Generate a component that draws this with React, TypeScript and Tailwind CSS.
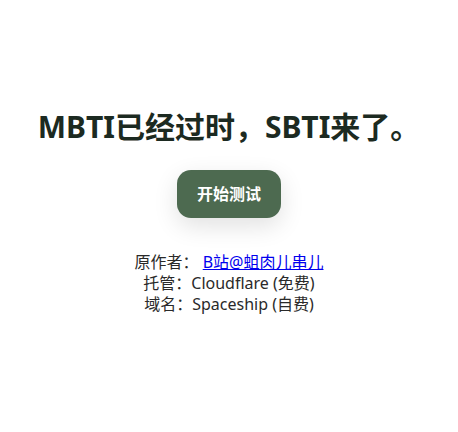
export default function App(): JSX.Element {
  return (
    <div
      className="min-h-screen bg-white flex flex-col items-center justify-center px-4 pb-[10px] text-center"
      style={{ fontFamily: '"Segoe UI", "Noto Sans", "Noto Sans CJK SC", sans-serif' }}
    >
      <h1 className="text-[30px] font-bold leading-[40px] text-[#1c2a21]">
        MBTI已经过时，SBTI来了。
      </h1>

      <button
        type="button"
        className="mt-[23px] w-[104px] h-12 rounded-[14px] bg-[#4d6a50] text-white text-base font-bold shadow-[0_8px_24px_rgba(0,0,0,0.12)]"
      >
        开始测试
      </button>

      <div className="mt-[34px] text-base leading-[21px] text-[#2a2a2a]">
        <div>
          原作者：{' '}
          <a href="#" className="text-[#0000ee] underline">
            B站@蛆肉儿串儿
          </a>
        </div>
        <div>托管：Cloudflare (免费)</div>
        <div>域名：Spaceship (自费)</div>
      </div>
    </div>
  );
}
